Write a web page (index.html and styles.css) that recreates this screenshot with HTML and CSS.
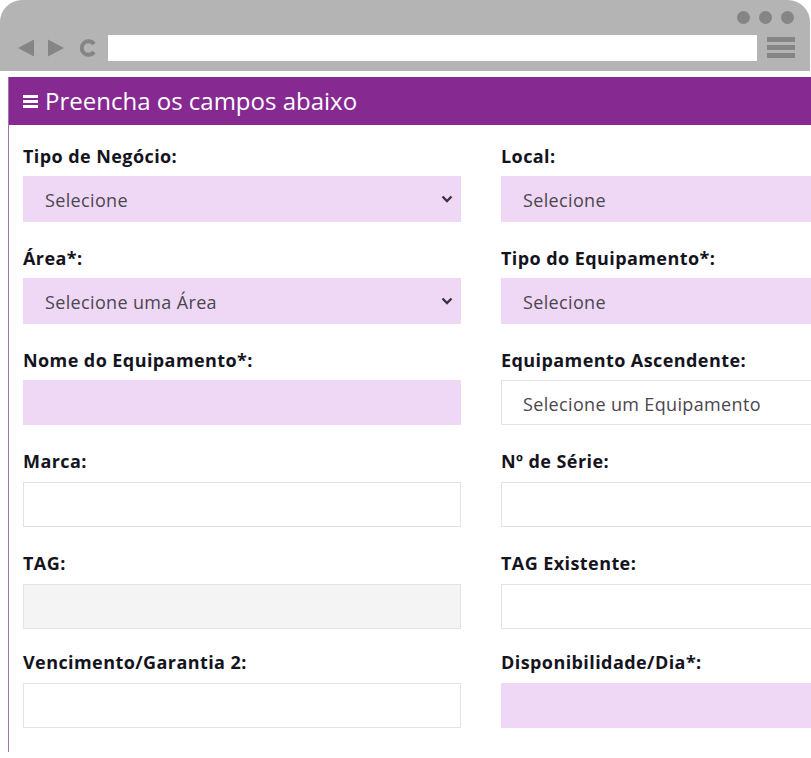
FILE: index.html
```html
<!DOCTYPE html>
<html lang="pt">
<head>
<meta charset="utf-8">
<title>Preencha os campos abaixo</title>
<link rel="stylesheet" href="styles.css">
</head>
<body>
<div class="browser">
  <div class="dots"><span class="dot"></span><span class="dot"></span><span class="dot"></span></div>
  <div class="toolbar">
    <svg class="nav" width="78" height="18" viewBox="0 0 78 18" aria-hidden="true">
      <path d="M0 9 16 0.5V17.5Z" fill="#858585"/>
      <path d="M30 0.5 46 9 30 17.5Z" fill="#858585"/>
      <path d="M76 5A6.8 6.8 0 1 0 76 13" fill="none" stroke="#858585" stroke-width="4"/>
    </svg>
    <div class="address"></div>
    <div class="menu"><span></span><span></span><span></span></div>
  </div>
</div>
<main class="panel">
  <h1 class="panel-title">
    <span class="title-icon"><span></span><span></span><span></span></span>Preencha os campos abaixo
  </h1>
  <form class="fields">
    <div class="field">
      <label class="label">Tipo de Negócio:</label>
      <div class="select-wrap">
        <select class="control required"><option>Selecione</option></select>
        <svg class="chevron" width="12" height="8" viewBox="0 0 12 8" aria-hidden="true"><path d="M1.5 1.5 6 6l4.5-4.5" fill="none" stroke="#3c3340" stroke-width="2.4"/></svg>
      </div>
    </div>
    <div class="field">
      <label class="label">Local:</label>
      <div class="select-wrap"><select class="control required"><option>Selecione</option></select></div>
    </div>
    <div class="field">
      <label class="label">Área*:</label>
      <div class="select-wrap">
        <select class="control required"><option>Selecione uma Área</option></select>
        <svg class="chevron" width="12" height="8" viewBox="0 0 12 8" aria-hidden="true"><path d="M1.5 1.5 6 6l4.5-4.5" fill="none" stroke="#3c3340" stroke-width="2.4"/></svg>
      </div>
    </div>
    <div class="field">
      <label class="label">Tipo do Equipamento*:</label>
      <div class="select-wrap"><select class="control required"><option>Selecione</option></select></div>
    </div>
    <div class="field">
      <label class="label">Nome do Equipamento*:</label>
      <input class="control short required" type="text">
    </div>
    <div class="field">
      <label class="label">Equipamento Ascendente:</label>
      <div class="select-wrap"><select class="control short plain"><option>Selecione um Equipamento</option></select></div>
    </div>
    <div class="field">
      <label class="label label-up">Marca:</label>
      <input class="control short plain" type="text">
    </div>
    <div class="field">
      <label class="label label-up">Nº de Série:</label>
      <input class="control short plain" type="text">
    </div>
    <div class="field">
      <label class="label label-up">TAG:</label>
      <input class="control short disabled" type="text" disabled>
    </div>
    <div class="field">
      <label class="label label-up">TAG Existente:</label>
      <input class="control short plain" type="text">
    </div>
    <div class="field field-last">
      <label class="label label-up">Vencimento/Garantia 2:</label>
      <input class="control short plain" type="text">
    </div>
    <div class="field field-last">
      <label class="label label-up">Disponibilidade/Dia*:</label>
      <input class="control short required" type="text">
    </div>
  </form>
</main>
</body>
</html>
```
FILE: styles.css
```css
html, body {
  margin: 0;
  padding: 0;
  height: 758px;
  overflow: hidden;
  background: #fff;
  font-family: "Open Sans", sans-serif;
}

.browser {
  width: 810px;
  height: 71px;
  box-sizing: border-box;
  background: #b4b4b4;
  border-radius: 22px 22px 0 0;
  padding: 11px 16px 0 18px;
  display: flex;
  flex-direction: column;
}

.dots {
  display: flex;
  justify-content: flex-end;
  gap: 9px;
  height: 14px;
}

.dot {
  width: 13px;
  height: 13px;
  border-radius: 50%;
  background: #858585;
}

.toolbar {
  display: flex;
  align-items: center;
  margin-top: 10px;
  height: 26px;
}

.nav {
  flex: none;
  width: 78px;
  margin-right: 12px;
}

.address {
  flex: none;
  width: 649px;
  height: 26px;
  background: #fff;
}

.menu {
  flex: none;
  width: 28px;
  margin-left: 10px;
  margin-top: -2px;
  display: flex;
  flex-direction: column;
  gap: 3px;
}

.menu span {
  height: 5px;
  background: #858585;
}

.panel {
  margin: 6px 0 0 8px;
  height: 675px;
  box-sizing: border-box;
  border-left: 1px solid #a76fae;
  overflow: hidden;
}

.panel-title {
  margin: 0;
  height: 48px;
  padding-left: 14px;
  padding-bottom: 2px;
  box-sizing: border-box;
  display: flex;
  align-items: center;
  background: #862a92;
  color: #fff;
  font-size: 24px;
  font-weight: 400;
  white-space: nowrap;
}

.title-icon {
  display: flex;
  flex-direction: column;
  gap: 2px;
  width: 15px;
  margin-right: 7px;
  margin-top: 3px;
}

.title-icon span {
  height: 3px;
  background: #fff;
}

.fields {
  display: grid;
  grid-template-columns: 438px 438px;
  column-gap: 40px;
  padding: 20px 0 0 14px;
  width: 930px;
}

.field {
  height: 102px;
}

.field-last {
  margin-top: -3px;
}

.label {
  display: block;
  height: 31px;
  line-height: 22px;
  font-size: 18px;
  font-weight: 700;
  letter-spacing: 0.42px;
  color: #14141e;
  white-space: nowrap;
}

.label-up {
  position: relative;
  top: -1px;
}

.select-wrap {
  position: relative;
}

.control {
  display: block;
  width: 438px;
  height: 46px;
  box-sizing: border-box;
  padding: 2px 22px 0 22px;
  border: 0;
  border-radius: 0;
  appearance: none;
  font-family: "Open Sans", sans-serif;
  font-size: 18px;
  letter-spacing: 0.35px;
  color: #4b4650;
  outline: none;
}

.short {
  height: 45px;
}

.required {
  background: #efd8f5;
}

.plain {
  background: #fff;
  border: 1px solid #e3e3e3;
  padding-left: 21px;
}

.disabled {
  background: #f4f4f4;
  border: 1px solid #e3e3e3;
}

.chevron {
  position: absolute;
  right: 8px;
  top: 19px;
}
```
